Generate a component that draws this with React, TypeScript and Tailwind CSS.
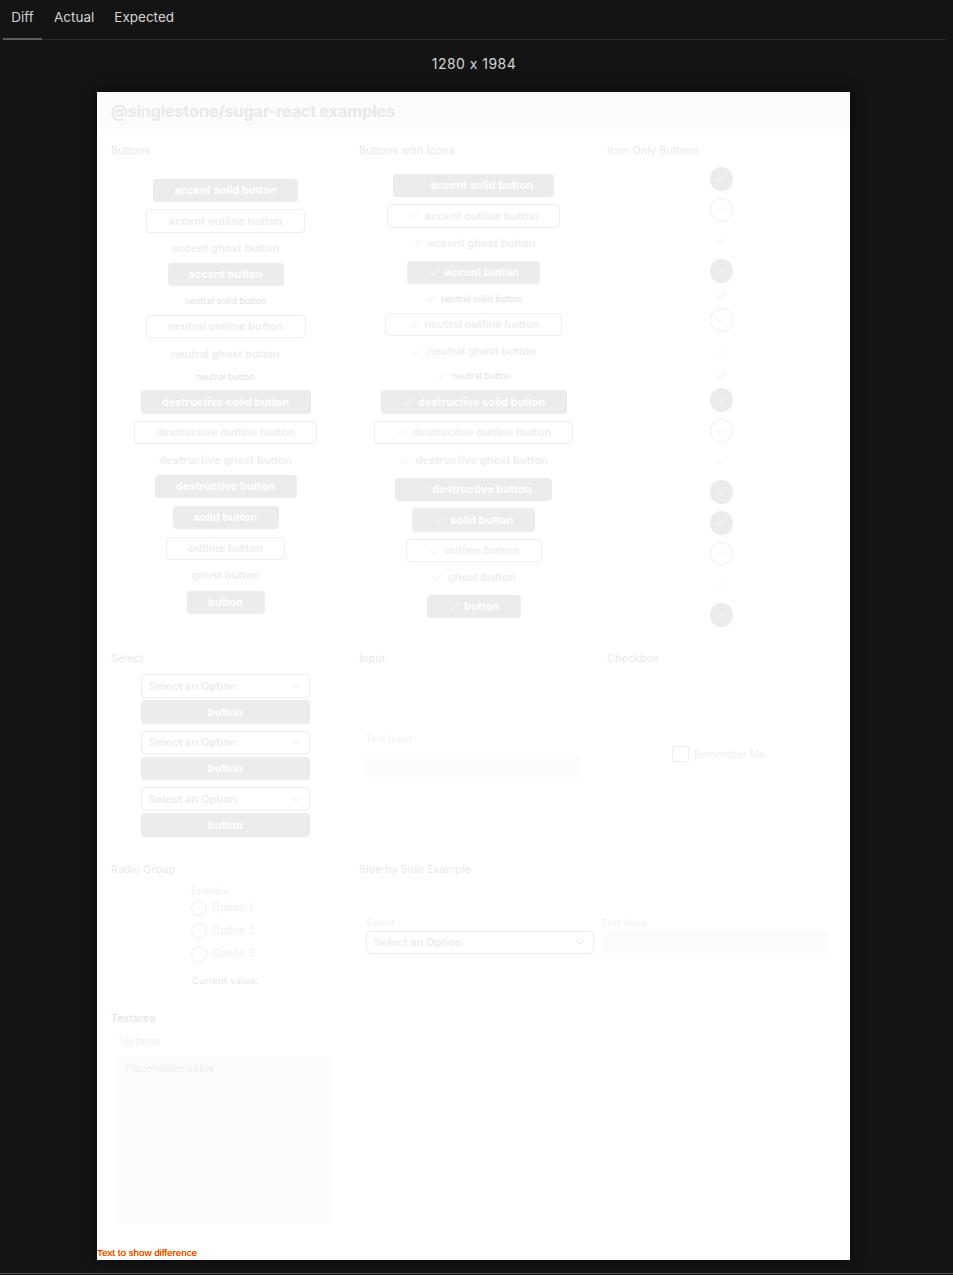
import { Check, ChevronDown } from 'lucide-react'

type Kind = 'solid' | 'outline' | 'ghost' | 'plain'

interface Item {
  label: string
  kind: Kind
  w: string
  mt: string
}

const baseRows: Item[] = [
  { label: 'accent solid button', kind: 'solid', w: 'w-[145px]', mt: 'mt-0' },
  { label: 'accent outline button', kind: 'outline', w: 'w-[159px]', mt: 'mt-[7.1px]' },
  { label: 'accent ghost button', kind: 'ghost', w: 'w-[120px]', mt: 'mt-[7.7px]' },
  { label: 'accent button', kind: 'solid', w: 'w-[116px]', mt: 'mt-[7.5px]' },
  { label: 'neutral solid button', kind: 'plain', w: 'w-[100px]', mt: 'mt-[7.5px]' },
  { label: 'neutral outline button', kind: 'outline', w: 'w-[160px]', mt: 'mt-[7px]' },
  { label: 'neutral ghost button', kind: 'ghost', w: 'w-[120px]', mt: 'mt-[8px]' },
  { label: 'neutral button', kind: 'plain', w: 'w-[100px]', mt: 'mt-[8.5px]' },
  { label: 'destructive solid button', kind: 'solid', w: 'w-[170px]', mt: 'mt-[6.5px]' },
  { label: 'destructive outline button', kind: 'outline', w: 'w-[183px]', mt: 'mt-[7px]' },
  { label: 'destructive ghost button', kind: 'ghost', w: 'w-[140px]', mt: 'mt-[8px]' },
  { label: 'destructive button', kind: 'solid', w: 'w-[142px]', mt: 'mt-[7.5px]' },
  { label: 'solid button', kind: 'solid', w: 'w-[106px]', mt: 'mt-[7.5px]' },
  { label: 'outline button', kind: 'outline', w: 'w-[119px]', mt: 'mt-[7.5px]' },
  { label: 'ghost button', kind: 'ghost', w: 'w-[80px]', mt: 'mt-[7px]' },
  { label: 'button', kind: 'solid', w: 'w-[78px]', mt: 'mt-[8.5px]' },
]

const iconRows: Item[] = [
  { label: 'accent solid button', kind: 'solid', w: 'w-[161px]', mt: 'mt-0' },
  { label: 'accent outline button', kind: 'outline', w: 'w-[173px]', mt: 'mt-[7px]' },
  { label: 'accent ghost button', kind: 'ghost', w: 'w-[130px]', mt: 'mt-[7.5px]' },
  { label: 'accent button', kind: 'solid', w: 'w-[133px]', mt: 'mt-[8.5px]' },
  { label: 'neutral solid button', kind: 'plain', w: 'w-[120px]', mt: 'mt-[7px]' },
  { label: 'neutral outline button', kind: 'outline', w: 'w-[177px]', mt: 'mt-[6.5px]' },
  { label: 'neutral ghost button', kind: 'ghost', w: 'w-[130px]', mt: 'mt-[7px]' },
  { label: 'neutral button', kind: 'plain', w: 'w-[100px]', mt: 'mt-[8px]' },
  { label: 'destructive solid button', kind: 'solid', w: 'w-[186px]', mt: 'mt-[7px]' },
  { label: 'destructive outline button', kind: 'outline', w: 'w-[199px]', mt: 'mt-[7px]' },
  { label: 'destructive ghost button', kind: 'ghost', w: 'w-[160px]', mt: 'mt-[8px]' },
  { label: 'destructive button', kind: 'solid', w: 'w-[157px]', mt: 'mt-[8.5px]' },
  { label: 'solid button', kind: 'solid', w: 'w-[123px]', mt: 'mt-[7px]' },
  { label: 'outline button', kind: 'outline', w: 'w-[136px]', mt: 'mt-[7px]' },
  { label: 'ghost button', kind: 'ghost', w: 'w-[100px]', mt: 'mt-[7px]' },
  { label: 'button', kind: 'solid', w: 'w-[94px]', mt: 'mt-[8.5px]' },
]

const iconOnly: { kind: Kind; mt: string }[] = [
  { kind: 'solid', mt: 'mt-0' },
  { kind: 'outline', mt: 'mt-[7.5px]' },
  { kind: 'ghost', mt: 'mt-[11.5px]' },
  { kind: 'solid', mt: 'mt-[12px]' },
  { kind: 'plain', mt: 'mt-[5.5px]' },
  { kind: 'outline', mt: 'mt-[6px]' },
  { kind: 'ghost', mt: 'mt-[12.5px]' },
  { kind: 'plain', mt: 'mt-[10px]' },
  { kind: 'solid', mt: 'mt-[6px]' },
  { kind: 'outline', mt: 'mt-[7.5px]' },
  { kind: 'ghost', mt: 'mt-[11.5px]' },
  { kind: 'solid', mt: 'mt-[12px]' },
  { kind: 'solid', mt: 'mt-[7.5px]' },
  { kind: 'outline', mt: 'mt-[7px]' },
  { kind: 'ghost', mt: 'mt-[11px]' },
  { kind: 'solid', mt: 'mt-[13px]' },
]

const kindClass = (kind: Kind, icon?: boolean) => {
  if (kind === 'solid') return 'h-[23.5px] rounded-[4px] bg-[#ececec] text-white font-bold text-[11px]'
  if (kind === 'outline') return 'h-[23.5px] rounded-[4px] border border-[#eeeeee] bg-white text-[#efefef] font-bold text-[11px]'
  if (kind === 'ghost') return `${icon ? 'h-[17px]' : 'h-[15px]'} text-[#efefef] font-bold text-[11px]`
  return `${icon ? 'h-[15px]' : 'h-[14px]'} text-[#e2e2e2] text-[9px]`
}

function Heading({ children }: { children: string }) {
  return <h2 className="text-[10.5px] leading-[14px] tracking-[0.25px] text-[#e8e8e8]">{children}</h2>
}

function Btn({ item, icon }: { item: Item; icon?: boolean }) {
  const solid = item.kind === 'solid'
  return (
    <div className={`flex shrink-0 items-center justify-center gap-[3.5px] ${item.w} ${item.mt} ${kindClass(item.kind, icon)}`}>
      {icon && <Check size={13} strokeWidth={1.1} className={solid ? 'text-white' : 'text-[#e2e2e2]'} />}
      <span>{item.label}</span>
    </div>
  )
}

function IconBtn({ kind, mt }: { kind: Kind; mt: string }) {
  if (kind === 'solid' || kind === 'outline') {
    const cls = kind === 'solid' ? 'bg-[#ececec] text-white' : 'border border-[#eeeeee] bg-white text-[#e6e6e6]'
    return (
      <div className={`flex h-[23.5px] w-[23.5px] shrink-0 items-center justify-center rounded-full ${mt} ${cls}`}>
        <Check size={13} strokeWidth={1.1} />
      </div>
    )
  }
  return (
    <div className={`flex h-[14px] shrink-0 items-center justify-center ${mt} ${kind === 'ghost' ? 'text-[#ebebeb]' : 'text-[#dadada]'}`}>
      <Check size={13} strokeWidth={1.1} />
    </div>
  )
}

function SelectBox({ className }: { className: string }) {
  return (
    <div className={`flex items-center justify-between rounded-[4px] border border-[#ededed] bg-white pl-[7px] pr-[5px] ${className}`}>
      <span className="text-[11px] font-semibold text-[#ececec]">Select an Option</span>
      <ChevronDown size={16} strokeWidth={0.9} className="text-[#dcdcdc]" />
    </div>
  )
}

function SelectGroup() {
  return (
    <div className="flex w-[169px] flex-col gap-[2.5px]">
      <SelectBox className="h-[23.5px]" />
      <div className="flex h-[23.5px] items-center justify-center rounded-[4px] bg-[#ececec] text-[11px] font-bold text-white">button</div>
    </div>
  )
}

function Radio({ label }: { label: string }) {
  return (
    <div className="flex h-[16px] items-center gap-[5px]">
      <div className="h-[16px] w-[16px] rounded-full border border-[#eeeeee]" />
      <span className="text-[10.5px] tracking-[0.1px] text-[#efefef]">{label}</span>
    </div>
  )
}

export default function App() {
  return (
    <div className="relative h-[1275px] w-[953px] overflow-hidden bg-[#141414] font-['Inter',sans-serif] text-[#d4d4d4]">
      <div className="ml-[3px] mr-[8px] flex h-[40px] border-b border-[#2b2b2b]">
        <div className="h-[40px] w-[39px] border-b-2 border-[#5e5e5e] pt-[8px] text-center text-[13.5px] leading-[18px] text-[#d0d0d0]">Diff</div>
        <div className="ml-[12px] pt-[8px] text-[13.5px] leading-[18px]">Actual</div>
        <div className="ml-[20px] pt-[8px] text-[13.5px] leading-[18px]">Expected</div>
      </div>

      <div className="mt-[15px] h-[18px] pr-[5px] text-center text-[14px] leading-[18px] tracking-[0.45px]">1280 x 1984</div>

      <div className="ml-[97px] mt-[19px] flex h-[1168px] w-[753px] flex-col bg-white shadow-[0_0_12px_rgba(0,0,0,0.5)]">
        <div className="flex h-[38px] shrink-0 items-center bg-[#fcfcfc] pl-[14px]">
          <h1 className="text-[16.5px] font-bold tracking-[-0.3px] text-[#e9e9e9]">@singlestone/sugar-react examples</h1>
        </div>

        <div className="grid grid-cols-[229px_229px_229px] gap-x-[19px] pl-[14px] pt-[13px]">
          <div>
            <div className="pt-[1px]">
              <Heading>Buttons</Heading>
            </div>
            <div className="mt-[20.5px] flex flex-col items-center">
              {baseRows.map((item) => (
                <Btn key={item.label} item={item} />
              ))}
            </div>
          </div>
          <div>
            <div className="pt-[1px]">
              <Heading>Buttons with Icons</Heading>
            </div>
            <div className="mt-[15.5px] flex flex-col items-center">
              {iconRows.map((item) => (
                <Btn key={item.label} item={item} icon />
              ))}
            </div>
          </div>
          <div>
            <div className="pt-[1px]">
              <Heading>Icon Only Buttons</Heading>
            </div>
            <div className="mt-[9px] flex flex-col items-center">
              {iconOnly.map((b, i) => (
                <IconBtn key={i} kind={b.kind} mt={b.mt} />
              ))}
            </div>
          </div>
        </div>

        <div className="mt-[25.5px] grid grid-cols-[229px_229px_229px] gap-x-[19px] pl-[14px]">
          <div>
            <Heading>Select</Heading>
            <div className="mt-[8px] flex flex-col items-center gap-[7px]">
              <SelectGroup />
              <SelectGroup />
              <SelectGroup />
            </div>
          </div>
          <div className="flex flex-col">
            <Heading>Input</Heading>
            <div className="flex flex-1 flex-col justify-center pl-[7px] pt-[8px]">
              <div className="w-[215px]">
                <label className="block text-[9px] leading-[14px] tracking-[0.4px] text-[#efefef]">Text Input</label>
                <div className="mt-[8px] h-[24px] rounded-[4px] bg-[#fcfcfc]" />
              </div>
            </div>
          </div>
          <div className="flex flex-col">
            <Heading>Checkbox</Heading>
            <div className="flex flex-1 items-center justify-center pr-[6px] pt-[6px]">
              <div className="h-[16px] w-[17px] rounded-[2px] border border-[#eeeeee]" />
              <span className="ml-[5px] text-[10.3px] text-[#efefef]">Remember Me</span>
            </div>
          </div>
        </div>

        <div className="mt-[26px] grid grid-cols-[229px_477px] gap-x-[19px] pl-[14px]">
          <div>
            <Heading>Radio Group</Heading>
            <div className="ml-[80px] mt-[8px] flex flex-col">
              <span className="text-[9px] leading-[12px] tracking-[0.3px] text-[#f0f0f0]">Example</span>
              <div className="mt-[3px] flex flex-col gap-[7px]">
                <Radio label="Option 1" />
                <Radio label="Option 2" />
                <Radio label="Option 3" />
              </div>
              <span className="ml-[1px] mt-[13px] text-[9px] leading-[12px] tracking-[0.45px] text-[#e6e6e6]">Current value:</span>
            </div>
          </div>
          <div>
            <Heading>Side by Side Example</Heading>
            <div className="ml-[7px] mt-[40px] grid grid-cols-[228px_228px] gap-x-[7px]">
              <div>
                <label className="block text-[9px] leading-[12px] tracking-[0.4px] text-[#f0f0f0]">Select</label>
                <SelectBox className="mt-[2px] h-[23px]" />
              </div>
              <div>
                <label className="block text-[9px] leading-[12px] tracking-[0.4px] text-[#f0f0f0]">Text Input</label>
                <div className="mt-[2px] h-[23px] rounded-[4px] bg-[#fcfcfc]" />
              </div>
            </div>
          </div>
        </div>

        <div className="mt-[25px] pl-[14px]">
          <h2 className="text-[10.5px] font-medium leading-[14px] tracking-[0.1px] text-[#e4e4e4]">Textarea</h2>
          <div className="ml-[7px] mt-[8px] w-[215px]">
            <label className="block text-[10px] leading-[14px] tracking-[0.2px] text-[#efefef]">Textarea</label>
            <div className="mt-[8px] h-[168px] rounded-[4px] bg-[#fcfcfc] px-[7px] pt-[6px] text-[10.5px] leading-[14px] tracking-[0.05px] text-[#ececec]">Placeholder value</div>
          </div>
        </div>

        <div className="mt-auto h-[13px] text-[9.8px] leading-[12px] text-[#ff0000] [font-family:'Liberation_Sans',sans-serif] [text-shadow:0.6px_0_0_#ffff00]">Text to show difference</div>
      </div>

      <div className="absolute bottom-[1px] left-0 h-[1px] w-full bg-[#555555]" />
    </div>
  )
}
